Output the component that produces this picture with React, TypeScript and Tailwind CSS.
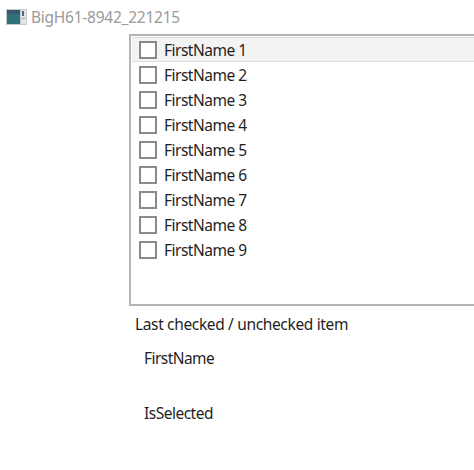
const names = [1, 2, 3, 4, 5, 6, 7, 8, 9];

function AppIcon() {
  return (
    <svg width="21" height="16" viewBox="0 0 21 16" className="shrink-0">
      <rect x="0" y="0" width="21" height="16" fill="#c4ccd0" />
      <rect x="1" y="1" width="13" height="14" fill="#2f7378" />
      <rect x="1" y="1" width="13" height="4" fill="#35586c" />
      <rect x="15" y="1" width="5" height="14" fill="#e4e4e0" />
      <rect x="16" y="2" width="2" height="5" fill="#4c6a80" />
      <rect x="16" y="9" width="3" height="1" fill="#9aa4aa" />
    </svg>
  );
}

export default function App() {
  return (
    <div className="w-[474px] h-[470px] bg-white overflow-hidden font-['Noto_Sans',sans-serif] text-[#1f1f1f]">
      <div className="flex items-center h-[34px] pl-[6px] pb-[1px] gap-[4px]">
        <AppIcon />
        <span className="text-[15.5px] tracking-[-0.25px] leading-[20px] text-[#9a9a9a]">BigH61-8942_221215</span>
      </div>
      <div className="ml-[129px] h-[272px] border-t-2 border-l-2 border-b-2 border-[#b4b4b4] pt-[1px] pl-[1px]">
        <div className="flex flex-col">
          {names.map((n) => (
            <div
              key={n}
              className={
                n === 1
                  ? "flex items-center h-[25px] pl-[7px] gap-[7px] bg-[#f3f3f3] border-y border-[#dcdcdc]"
                  : "flex items-center h-[25px] pl-[7px] gap-[7px]"
              }
            >
              <span className="w-[18px] h-[18px] border-2 border-[#8a8a8a] bg-white shrink-0" />
              <span className="text-[15.5px] tracking-[-0.5px] leading-[20px]">FirstName {n}</span>
            </div>
          ))}
        </div>
      </div>
      <div className="ml-[135px] mt-[8px] text-[15.5px] tracking-[-0.35px] leading-[20px]">Last checked / unchecked item</div>
      <div className="ml-[144px] mt-[14px] text-[15.5px] tracking-[-0.55px] leading-[20px]">FirstName</div>
      <div className="ml-[144px] mt-[35px] text-[15.5px] tracking-[-0.5px] leading-[20px]">IsSelected</div>
    </div>
  );
}
